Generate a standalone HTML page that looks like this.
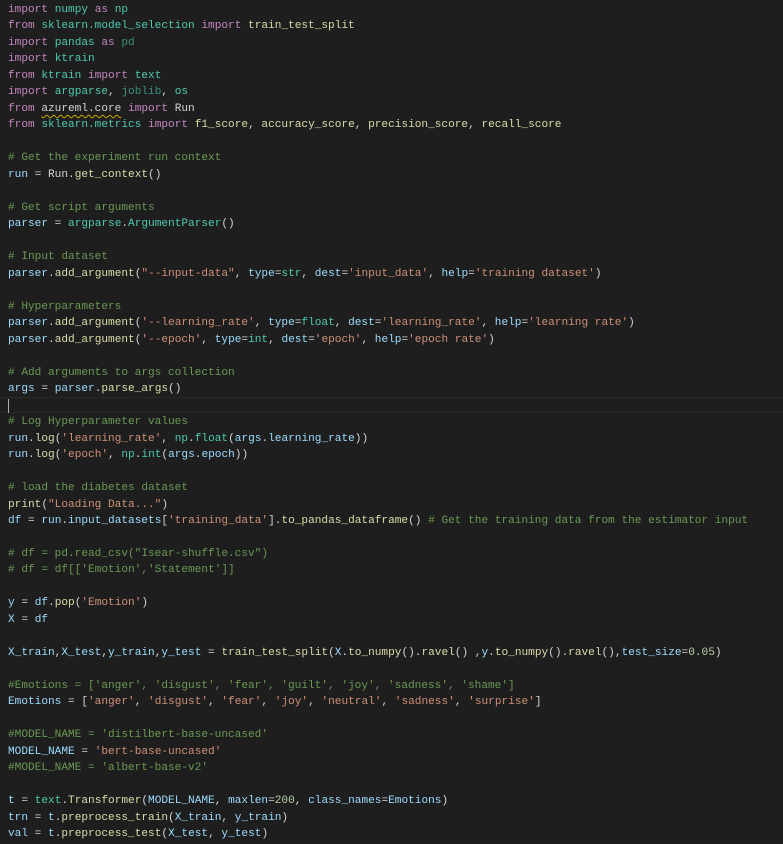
<!DOCTYPE html>
<html><head><meta charset="utf-8"><style>
html,body{margin:0;padding:0;background:#1e1e1e;width:783px;height:844px;overflow:hidden}
pre{margin:0;padding:2px 0 0 8px;font-family:"Liberation Mono",monospace;font-size:11.12px;line-height:16.48px;color:#d4d4d4;white-space:pre}
.k{color:#c586c0}.m{color:#4ec9b0}.md{color:#3a8f7d}.v{color:#9cdcfe}.f{color:#dcdcaa}.s{color:#ce9178}.c{color:#6a9955}.n{color:#b5cea8}
.sq{text-decoration:underline wavy #c8a800;text-decoration-thickness:1px;text-underline-offset:3px}
.cur{position:absolute;left:0;top:397px;width:783px;height:16px;border-top:1px solid #282828;border-bottom:1px solid #282828;box-sizing:border-box}
.caret{position:absolute;left:8px;top:399px;width:1px;height:14px;background:#aeafad}
</style></head><body>
<div class="cur"></div><div class="caret"></div>
<pre><span class="k">import</span> <span class="m">numpy</span> <span class="k">as</span> <span class="m">np</span>
<span class="k">from</span> <span class="m">sklearn.model_selection</span> <span class="k">import</span> <span class="f">train_test_split</span>
<span class="k">import</span> <span class="m">pandas</span> <span class="k">as</span> <span class="md">pd</span>
<span class="k">import</span> <span class="m">ktrain</span>
<span class="k">from</span> <span class="m">ktrain</span> <span class="k">import</span> <span class="m">text</span>
<span class="k">import</span> <span class="m">argparse</span>, <span class="md">joblib</span>, <span class="m">os</span>
<span class="k">from</span> <span class="sq">azureml.core</span> <span class="k">import</span> Run
<span class="k">from</span> <span class="m">sklearn.metrics</span> <span class="k">import</span> <span class="f">f1_score</span>, <span class="f">accuracy_score</span>, <span class="f">precision_score</span>, <span class="f">recall_score</span>

<span class="c"># Get the experiment run context</span>
<span class="v">run</span> = Run.<span class="f">get_context</span>()

<span class="c"># Get script arguments</span>
<span class="v">parser</span> = <span class="m">argparse</span>.<span class="m">ArgumentParser</span>()

<span class="c"># Input dataset</span>
<span class="v">parser</span>.<span class="f">add_argument</span>(<span class="s">"--input-data"</span>, <span class="v">type</span>=<span class="m">str</span>, <span class="v">dest</span>=<span class="s">'input_data'</span>, <span class="v">help</span>=<span class="s">'training dataset'</span>)

<span class="c"># Hyperparameters</span>
<span class="v">parser</span>.<span class="f">add_argument</span>(<span class="s">'--learning_rate'</span>, <span class="v">type</span>=<span class="m">float</span>, <span class="v">dest</span>=<span class="s">'learning_rate'</span>, <span class="v">help</span>=<span class="s">'learning rate'</span>)
<span class="v">parser</span>.<span class="f">add_argument</span>(<span class="s">'--epoch'</span>, <span class="v">type</span>=<span class="m">int</span>, <span class="v">dest</span>=<span class="s">'epoch'</span>, <span class="v">help</span>=<span class="s">'epoch rate'</span>)

<span class="c"># Add arguments to args collection</span>
<span class="v">args</span> = <span class="v">parser</span>.<span class="f">parse_args</span>()

<span class="c"># Log Hyperparameter values</span>
<span class="v">run</span>.<span class="f">log</span>(<span class="s">'learning_rate'</span>, <span class="m">np</span>.<span class="m">float</span>(<span class="v">args</span>.<span class="v">learning_rate</span>))
<span class="v">run</span>.<span class="f">log</span>(<span class="s">'epoch'</span>, <span class="m">np</span>.<span class="m">int</span>(<span class="v">args</span>.<span class="v">epoch</span>))

<span class="c"># load the diabetes dataset</span>
<span class="f">print</span>(<span class="s">"Loading Data..."</span>)
<span class="v">df</span> = <span class="v">run</span>.<span class="v">input_datasets</span>[<span class="s">'training_data'</span>].<span class="f">to_pandas_dataframe</span>() <span class="c"># Get the training data from the estimator input</span>

<span class="c"># df = pd.read_csv("Isear-shuffle.csv")</span>
<span class="c"># df = df[['Emotion','Statement']]</span>

<span class="v">y</span> = <span class="v">df</span>.<span class="f">pop</span>(<span class="s">'Emotion'</span>)
<span class="v">X</span> = <span class="v">df</span>

<span class="v">X_train</span>,<span class="v">X_test</span>,<span class="v">y_train</span>,<span class="v">y_test</span> = <span class="f">train_test_split</span>(<span class="v">X</span>.<span class="f">to_numpy</span>().<span class="f">ravel</span>() ,<span class="v">y</span>.<span class="f">to_numpy</span>().<span class="f">ravel</span>(),<span class="v">test_size</span>=<span class="n">0.05</span>)

<span class="c">#Emotions = ['anger', 'disgust', 'fear', 'guilt', 'joy', 'sadness', 'shame']</span>
<span class="v">Emotions</span> = [<span class="s">'anger'</span>, <span class="s">'disgust'</span>, <span class="s">'fear'</span>, <span class="s">'joy'</span>, <span class="s">'neutral'</span>, <span class="s">'sadness'</span>, <span class="s">'surprise'</span>]

<span class="c">#MODEL_NAME = 'distilbert-base-uncased'</span>
<span class="v">MODEL_NAME</span> = <span class="s">'bert-base-uncased'</span>
<span class="c">#MODEL_NAME = 'albert-base-v2'</span>

<span class="v">t</span> = <span class="m">text</span>.<span class="f">Transformer</span>(<span class="v">MODEL_NAME</span>, <span class="v">maxlen</span>=<span class="n">200</span>, <span class="v">class_names</span>=<span class="v">Emotions</span>)
<span class="v">trn</span> = <span class="v">t</span>.<span class="f">preprocess_train</span>(<span class="v">X_train</span>, <span class="v">y_train</span>)
<span class="v">val</span> = <span class="v">t</span>.<span class="f">preprocess_test</span>(<span class="v">X_test</span>, <span class="v">y_test</span>)</pre>
</body></html>
